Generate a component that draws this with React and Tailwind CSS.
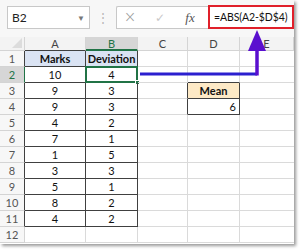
import React from "react";

const colW = ["w-[25px]", "w-[61px]", "w-[52px]", "w-[50px]", "w-[52px]", "flex-1"];

const marks = [10, 9, 9, 4, 7, 1, 3, 5, 8, 4];
const devs = [4, 3, 3, 2, 1, 5, 3, 1, 2, 2];

function HeaderRow() {
  const letters = ["A", "B", "C", "D", "E"];
  return (
    <div className="flex h-[14px] shrink-0">
      <div className="w-[25px] border-r border-b border-[#d4d4d4] bg-[#f3f3f3] relative">
        <div className="absolute right-[2px] bottom-[2px] w-0 h-0 border-l-[10px] border-l-transparent border-b-[10px] border-b-[#dcdcdc]" />
      </div>
      {letters.map((l, i) => {
        const sel = l === "B";
        const edge = l === "A" ? "border-b-[#404040]" : sel ? "border-b-[#217346] border-b-2" : "border-b-[#d4d4d4]";
        return (
          <div
            key={l}
            className={`${colW[i + 1]} flex items-center justify-center border-r border-b border-r-[#d4d4d4] ${edge} ${
              sel ? "bg-[#d6d6d6] text-[#217346]" : "bg-[#f3f3f3] text-[#444]"
            } text-[11px] leading-none`}
          >
            {l}
          </div>
        );
      })}
    </div>
  );
}

function Cell({ w, className = "", children }) {
  return <div className={`${w} relative flex items-center justify-center border-r border-b ${className}`}>{children}</div>;
}

function Row({ n }) {
  const inTable = n >= 1 && n <= 11;
  const sel = n === 2;
  const rowHdr = sel
    ? "bg-[#d6d6d6] text-[#217346] border-b-[#d4d4d4] border-r-[#217346]"
    : `bg-[#f7f7f7] text-[#555] border-b-[#d4d4d4] ${inTable ? "border-r-[#404040]" : "border-r-[#d4d4d4]"}`;
  const grid = "border-[#dadada]";
  const dark = "border-[#404040]";
  const headCell = n === 1 ? "bg-[#dae3f3] font-bold" : "";

  let a = "";
  let b = "";
  if (n === 1) {
    a = "Marks";
    b = "Deviation";
  } else if (inTable) {
    a = marks[n - 2];
    b = devs[n - 2];
  }

  let cBorder = grid;
  if (n === 3 || n === 4) cBorder = "border-b-[#dadada] border-r-[#404040]";
  let dBorder = grid;
  let dExtra = "";
  let dText = "";
  if (n === 2) dBorder = "border-r-[#dadada] border-b-[#404040]";
  if (n === 3) {
    dBorder = dark;
    dExtra = "bg-[#fde9c6] font-bold";
    dText = "Mean";
  }
  if (n === 4) {
    dBorder = dark;
    dExtra = "justify-end pr-[3px]";
    dText = "6";
  }

  return (
    <div className="flex h-[16px] shrink-0 text-[11px] text-[#111] leading-none">
      <Cell w={colW[0]} className={`${rowHdr} text-[11px]`}>
        {n}
      </Cell>
      <Cell w={colW[1]} className={`${inTable ? dark : grid} ${headCell}`}>
        {a}
      </Cell>
      <Cell w={colW[2]} className={`${inTable ? dark : grid} ${headCell}`}>
        {b}
        {sel && (
          <>
            <div className="absolute -left-px -top-px -right-px -bottom-px border-2 border-[#217346]" />
            <div className="absolute -right-[3px] -bottom-[3px] w-[5px] h-[5px] bg-[#217346] border border-white" />
          </>
        )}
      </Cell>
      <Cell w={colW[3]} className={cBorder} />
      <Cell w={colW[4]} className={`${dBorder} ${dExtra}`}>
        {dText}
      </Cell>
      <Cell w={colW[5]} className={`${grid} border-r-0`} />
    </div>
  );
}

export default function App() {
  return (
    <div className="relative w-[300px] h-[250px] bg-white overflow-hidden font-['Lato','Liberation_Sans',sans-serif]">
      <div className="w-[294px] h-[244px] bg-white flex flex-col overflow-hidden shadow-[2px_2px_3px_rgba(0,0,0,0.4)]">
        {/* formula bar */}
        <div className="h-[37px] shrink-0 bg-[#f7f7f7] flex items-start pt-[6px] pl-[7px]">
          <div className="w-[83px] h-[23px] bg-white border border-[#c8c8c8] flex items-center pl-[4px] pr-[4px] justify-between">
            <span className="text-[12px] text-[#222]">B2</span>
            <span className="text-[8px] text-[#777]">▼</span>
          </div>
          <div className="w-[26px] h-[23px] flex items-center justify-center text-[12px] text-[#b5b5b5]">⋮</div>
          <div className="flex-1 h-[23px] bg-white border border-[#c8c8c8] border-r-0 rounded-tl-[2px] flex items-center">
            <span className="w-[26px] text-center text-[15px] text-[#9a9a9a] font-['DejaVu_Sans'] font-light">×</span>
            <span className="w-[34px] text-center text-[12px] text-[#c8c8c8] font-['DejaVu_Sans']">✓</span>
            <span className="w-[26px] text-center text-[13px] text-[#555] italic font-['Liberation_Serif']">fx</span>
            <span className="pl-[11px] text-[10.5px] tracking-[-0.1px] text-[#111] whitespace-nowrap">=ABS(A2-$D$4)</span>
          </div>
        </div>
        <HeaderRow />
        {Array.from({ length: 12 }, (_, i) => (
          <Row key={i} n={i + 1} />
        ))}
      </div>

      {/* red highlight around formula */}
      <div className="absolute left-[208px] top-[5px] w-[86px] h-[24px] border-2 border-[#e0202a]" />

      {/* arrow from B2 to formula */}
      <svg className="absolute left-0 top-0" width="300" height="250" viewBox="0 0 300 250">
        <path d="M140 74 H257" stroke="#2b1fcf" strokeWidth="3" fill="none" />
        <path d="M257 75.5 V49" stroke="#5a0fcf" strokeWidth="3.5" fill="none" />
        <polygon points="248,51 266,51 257,30" fill="#5a0fcf" />
      </svg>
    </div>
  );
}
